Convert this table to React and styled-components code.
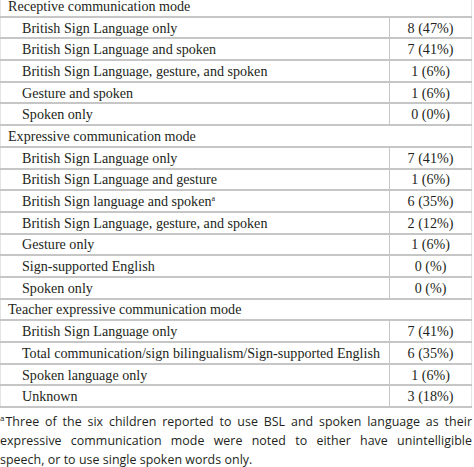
import React from 'react';
import styled, { createGlobalStyle } from 'styled-components';

const Global = createGlobalStyle`
  html, body { margin: 0; padding: 0; background: #fff; }
  body { width: 474px; height: 467px; overflow: hidden; }
`;

const Page = styled.div`
  width: 474px;
  color: #231f20;
`;

const Table = styled.table`
  width: 472px;
  margin-top: -6px;
  border-collapse: collapse;
  font-family: "Liberation Serif", "Times New Roman", serif;
  font-size: 14.1px;
`;

const Row = styled.tr`
  height: 21.7px;
  border-top: 2px solid #c6c6c6;
  border-bottom: 2px solid #c6c6c6;
  border-left: 1px solid #e4e4e4;
  border-right: 1px solid #e4e4e4;
`;

const Cell = styled.td`
  padding: 0 0 0 ${(p) => (p.$indent ? '21px' : '7px')};
  white-space: nowrap;
  line-height: 18px;
`;

const Value = styled.td`
  width: 81px;
  text-align: center;
  border-left: 1px solid #c6c6c6;
  white-space: nowrap;
  line-height: 18px;
  padding: 0;
`;

const Note = styled.p`
  margin: 4px 2px 0 0;
  font-family: "Open Sans", "DejaVu Sans", sans-serif;
  font-size: 12.4px;
  line-height: 19px;
  text-align: justify;
  letter-spacing: 0.05px;
`;

const Sup = styled.sup`
  font-size: 8px;
  vertical-align: 5px;
  line-height: 0;
  margin-right: 1px;
`;

const groups = [
  {
    title: 'Receptive communication mode',
    rows: [
      ['British Sign Language only', '8 (47%)'],
      ['British Sign Language and spoken', '7 (41%)'],
      ['British Sign Language, gesture, and spoken', '1 (6%)'],
      ['Gesture and spoken', '1 (6%)'],
      ['Spoken only', '0 (0%)'],
    ],
  },
  {
    title: 'Expressive communication mode',
    rows: [
      ['British Sign Language only', '7 (41%)'],
      ['British Sign Language and gesture', '1 (6%)'],
      ['British Sign language and spoken', '6 (35%)', true],
      ['British Sign Language, gesture, and spoken', '2 (12%)'],
      ['Gesture only', '1 (6%)'],
      ['Sign-supported English', '0 (%)'],
      ['Spoken only', '0 (%)'],
    ],
  },
  {
    title: 'Teacher expressive communication mode',
    rows: [
      ['British Sign Language only', '7 (41%)'],
      ['Total communication/sign bilingualism/Sign-supported English', '6 (35%)'],
      ['Spoken language only', '1 (6%)'],
      ['Unknown', '3 (18%)'],
    ],
  },
];

export default function App() {
  return (
    <Page>
      <Global />
      <Table>
        <tbody>
          {groups.map((g) => (
            <React.Fragment key={g.title}>
              <Row>
                <Cell colSpan={2}>{g.title}</Cell>
              </Row>
              {g.rows.map(([label, val, note], i) => (
                <Row key={i}>
                  <Cell $indent>
                    {label}
                    {note && <Sup>a</Sup>}
                  </Cell>
                  <Value>{val}</Value>
                </Row>
              ))}
            </React.Fragment>
          ))}
        </tbody>
      </Table>
      <Note>
        <Sup>a</Sup>Three of the six children reported to use BSL and spoken language as their
        expressive communication mode were noted to either have unintelligible speech, or to
        use single spoken words only.
      </Note>
    </Page>
  );
}
